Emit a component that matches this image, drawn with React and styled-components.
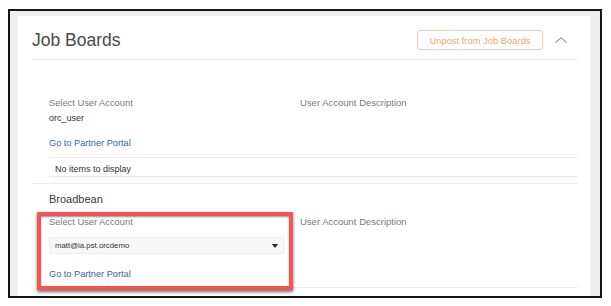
import styled, { createGlobalStyle } from "styled-components";

const GlobalStyle = createGlobalStyle`
    html, body {
        margin: 0;
        padding: 0;
        background: #ffffff;
        font-family: "Liberation Sans", Arial, sans-serif;
    }
`

export default function App() {
    return (
        <>
            <GlobalStyle/>
            <Frame>
                <Card>
                    <Header>
                        <Title>Job Boards</Title>
                        <UnpostButton>Unpost from Job Boards</UnpostButton>
                        <Chevron viewBox="0 0 12 6">
                            <path d="M0.5 5.5 L6 0.8 L11.5 5.5" fill="none" stroke="#a0a0a0" strokeWidth="1.1"/>
                        </Chevron>
                    </Header>

                    <Section $first>
                        <Fields>
                            <Column>
                                <Label>Select User Account</Label>
                                <Value>orc_user</Value>
                                <PortalLink href="#">Go to Partner Portal</PortalLink>
                            </Column>
                            <Column>
                                <Label $wide>User Account Description</Label>
                            </Column>
                        </Fields>
                        <Table>
                            <EmptyRow>No items to display</EmptyRow>
                        </Table>
                    </Section>

                    <Section>
                        <BoardName>Broadbean</BoardName>
                        <Fields $tight>
                            <Column>
                                <Label>Select User Account</Label>
                                <Select>
                                    <span>matt@la.pst.orcdemo</span>
                                    <Caret/>
                                </Select>
                                <PortalLink href="#" $gap={14}>Go to Partner Portal</PortalLink>
                            </Column>
                            <Column>
                                <Label $wide>User Account Description</Label>
                            </Column>
                        </Fields>
                        <BottomRule/>
                    </Section>

                    <Highlight/>
                </Card>
            </Frame>
        </>
    )
}

const Frame = styled.div`
    box-sizing: border-box;
    margin: 9px 0 0 8px;
    width: 594px;
    height: 289px;
    border: 2px solid #151515;
    background: #eeeeee;
    padding: 5px 10px 0 8px;
    overflow: hidden;
`

const Card = styled.div`
    position: relative;
    background: #ffffff;
    padding: 0 13px 0 14px;
    height: 400px;
`

const Header = styled.div`
    display: flex;
    align-items: center;
    padding: 14px 0 9px 0;
    border-bottom: 1px solid #e6e6e6;
`

const Title = styled.h2`
    flex-grow: 1;
    margin: 0;
    font-size: 17.5px;
    font-weight: normal;
    color: #4a4a4a;
    line-height: 20px;
`

const UnpostButton = styled.button`
    box-sizing: border-box;
    width: 126px;
    height: 20px;
    padding: 0;
    background: #ffffff;
    border: 1px solid #f9cfb2;
    border-radius: 2px;
    color: #f5a46e;
    font-family: "Liberation Sans", Arial, sans-serif;
    font-size: 9.4px;
`

const Chevron = styled.svg`
    width: 12px;
    height: 6px;
    margin: 0 10px 0 12px;
`

const Section = styled.div`
    padding: ${p => p.$first ? "37px 0 6px 17px" : "8px 0 0 17px"};
    border-bottom: ${p => p.$first ? "1px solid #ececec" : "none"};
`

const Fields = styled.div`
    display: grid;
    grid-template-columns: 251px 1fr;
    margin-top: ${p => p.$tight ? "10px" : "0"};
`

const Column = styled.div`
    display: flex;
    flex-direction: column;
    align-items: flex-start;
`

const Label = styled.div`
    font-size: ${p => p.$wide ? "9.5px" : "9.3px"};
    line-height: 12px;
    color: #7a7a7a;
`

const Value = styled.div`
    margin-top: 3px;
    font-size: 9px;
    line-height: 12px;
    color: #333333;
`

const PortalLink = styled.a`
    margin-top: ${p => p.$gap ?? 13}px;
    font-size: 9.2px;
    line-height: 12px;
    color: #2f68a8;
    text-decoration: none;
`

const Table = styled.div`
    margin-top: 8px;
    border-top: 1px solid #e7ebf0;
    border-bottom: 1px solid #e2e8ef;
`

const EmptyRow = styled.div`
    height: 18px;
    padding-left: 6px;
    display: flex;
    align-items: flex-end;
    font-size: 9px;
    line-height: 13px;
    color: #333333;
`

const BoardName = styled.div`
    font-size: 11px;
    line-height: 14px;
    color: #3a3a3a;
`

const Select = styled.div`
    box-sizing: border-box;
    display: flex;
    align-items: center;
    justify-content: space-between;
    width: 236px;
    height: 17px;
    margin-top: 9px;
    padding: 0 6px 0 5px;
    background: #f7f7f7;
    border: 1px solid #efefef;
    border-radius: 2px;
    font-size: 7.8px;
    color: #333333;
`

const Caret = styled.span`
    width: 0;
    height: 0;
    border-left: 3px solid transparent;
    border-right: 3px solid transparent;
    border-top: 4px solid #222222;
`

const BottomRule = styled.div`
    margin-top: 7px;
    border-top: 1px solid #e7ebf0;
`

const Highlight = styled.div`
    position: absolute;
    left: 19px;
    top: 196px;
    box-sizing: border-box;
    width: 256px;
    height: 78px;
    border: 4px solid #f25553;
    box-shadow: 0 2px 3px rgba(0, 0, 0, 0.55), inset 0 1px 2px rgba(0, 0, 0, 0.45);
    pointer-events: none;
`
